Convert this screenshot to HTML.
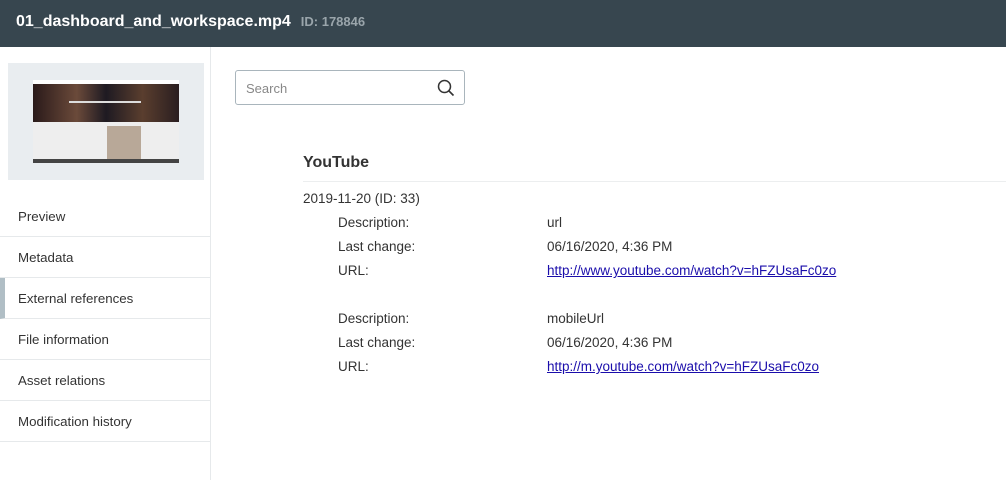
<!DOCTYPE html>
<html><head><meta charset="utf-8"><style>
*{box-sizing:border-box;margin:0;padding:0}
body{width:1006px;height:480px;overflow:hidden;background:#fff;font-family:"Liberation Sans",sans-serif;color:#333;font-size:13px;position:relative}
.hdr{position:absolute;left:0;top:0;width:1006px;height:47px;background:#37464f}
.hdr .t{position:absolute;left:16px;top:13px;color:#fff;font-size:16px;font-weight:bold}
.hdr .id{color:#9aa5ab;font-size:13px;font-weight:bold;margin-left:10px}
.side{position:absolute;left:0;top:47px;width:211px;height:433px;border-right:1px solid #e6e9eb}
.thumb{position:absolute;left:8px;top:16px;width:196px;height:117px;background:#e9edf0}
.img{position:absolute;left:25px;top:17px;width:146px;height:83px;background:#eee}
.nav{position:absolute;left:0;width:210px;height:41px;border-bottom:1px solid #e6e9eb;padding:13px 18px;font-size:13.3px;color:#333}
.nav.act{border-left:5px solid #b0bec5;padding-left:13px}
.search{position:absolute;left:235px;top:70px;width:230px;height:35px;border:1px solid #a9b5bc;border-radius:3px}
.search span{position:absolute;left:10px;top:10px;color:#888;font-size:13px}
h2{position:absolute;left:303px;top:154px;font-size:16px;font-weight:bold;color:#333}
.line{position:absolute;left:303px;top:181px;width:703px;height:1px;background:#eceeef}
.r{position:absolute;font-size:13.5px}
a{color:#1a0dab;text-decoration:underline}
</style></head><body>
<div class="hdr"><div class="t">01_dashboard_and_workspace.mp4<span class="id">ID: 178846</span></div></div>
<div class="side">
<div class="thumb"><div class="img">
<div style="position:absolute;left:0;top:0;width:146px;height:4px;background:#fff"></div>
<div style="position:absolute;left:0;top:4px;width:146px;height:38px;background:linear-gradient(90deg,#2a1a1a,#6b4a3a 30%,#1e1a22 50%,#5a3e2e 75%,#2a1e20)"></div>
<div style="position:absolute;left:36px;top:21px;width:72px;height:2px;background:#ddd"></div>
<div style="position:absolute;left:74px;top:46px;width:34px;height:33px;background:#b8a898"></div>
<div style="position:absolute;left:0;top:79px;width:146px;height:4px;background:#444"></div>
</div></div>
<div class="nav" style="top:149px">Preview</div>
<div class="nav" style="top:190px">Metadata</div>
<div class="nav act" style="top:231px">External references</div>
<div class="nav" style="top:272px">File information</div>
<div class="nav" style="top:313px">Asset relations</div>
<div class="nav" style="top:354px">Modification history</div>
</div>
<div class="search"><span>Search</span>
<svg style="position:absolute;left:201px;top:8px" width="18" height="18" viewBox="0 0 18 18"><circle cx="7.5" cy="7.5" r="6" fill="none" stroke="#333" stroke-width="1.5"/><path d="M12 12L16.5 16.5" stroke="#333" stroke-width="1.6"/></svg></div>
<h2>YouTube</h2>
<div class="line"></div>
<div class="r" style="left:303px;top:191px">2019-11-20 (ID: 33)</div>
<div class="r" style="left:338px;top:215px">Description:</div><div class="r" style="left:547px;top:215px">url</div>
<div class="r" style="left:338px;top:239px">Last change:</div><div class="r" style="left:547px;top:239px">06/16/2020, 4:36 PM</div>
<div class="r" style="left:338px;top:263px">URL:</div><div class="r" style="left:547px;top:263px"><a href="#">http://www.youtube.com/watch?v=hFZUsaFc0zo</a></div>
<div class="r" style="left:338px;top:311px">Description:</div><div class="r" style="left:547px;top:311px">mobileUrl</div>
<div class="r" style="left:338px;top:335px">Last change:</div><div class="r" style="left:547px;top:335px">06/16/2020, 4:36 PM</div>
<div class="r" style="left:338px;top:359px">URL:</div><div class="r" style="left:547px;top:359px"><a href="#">http://m.youtube.com/watch?v=hFZUsaFc0zo</a></div>
</body></html>
